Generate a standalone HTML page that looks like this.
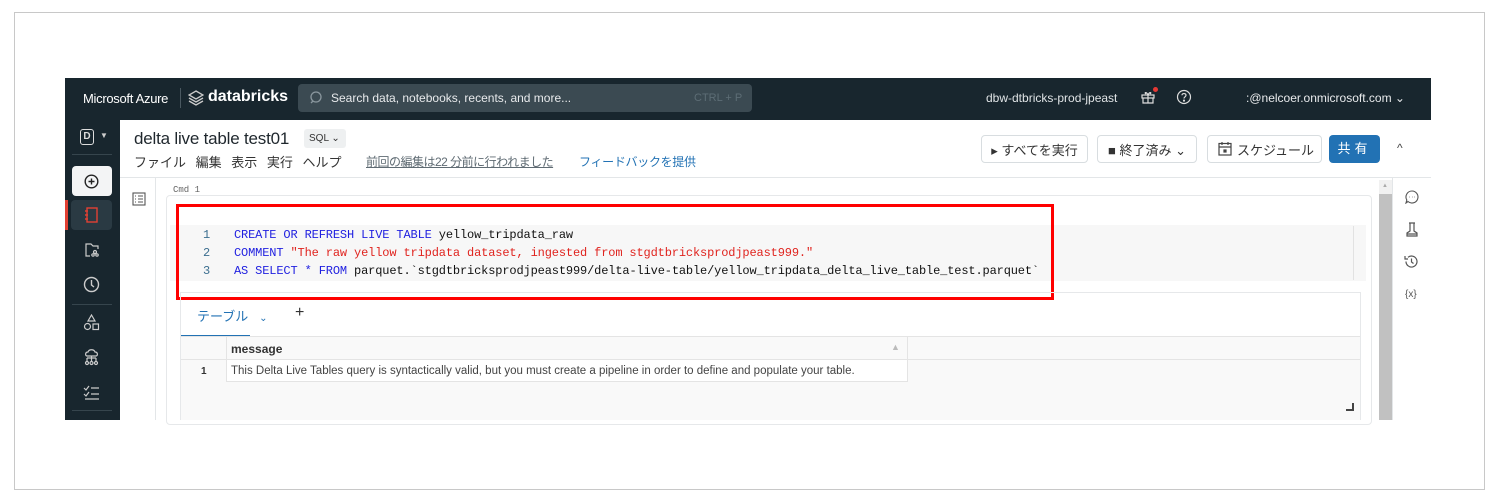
<!DOCTYPE html>
<html><head><meta charset="utf-8"><style>
*{box-sizing:border-box;margin:0;padding:0}
body{width:1495px;height:500px;background:#fff;font-family:"Liberation Sans","Noto Sans CJK JP",sans-serif;position:relative;overflow:hidden}
.a{position:absolute;white-space:nowrap}
.frame{left:14px;top:12px;width:1471px;height:478px;border:1px solid #c8c8c8}
.top{left:65px;top:78px;width:1366px;height:42px;background:#18262e}
.side{left:65px;top:120px;width:55px;height:300px;background:#18262e}
.mono{font-family:"Liberation Mono","DejaVu Sans Mono",monospace}
.btn{border:1px solid #d8dde0;border-radius:4px;background:#fff;height:28px;top:135px;font-size:13px;color:#333;display:flex;align-items:center;justify-content:center}
.kw{color:#1f1fe0}.st{color:#e0241f}
svg{position:absolute}
</style></head><body>
<div class="a frame"></div>
<div class="a top"></div>
<div class="a" style="left:83px;top:91px;color:#fff;font-size:13px;letter-spacing:-0.3px">Microsoft Azure</div>
<div class="a" style="left:180px;top:88px;width:1px;height:20px;background:#4a5860"></div>
<svg style="left:188px;top:90px" width="16" height="16" viewBox="0 0 16 16" fill="none" stroke="#ccc" stroke-width="1.3"><path d="M8 1L15 5L8 9L1 5Z M1 8L8 12L15 8 M1 11L8 15L15 11"/></svg>
<div class="a" style="left:208px;top:88px;color:#fff;font-size:16px;font-weight:bold">databricks</div>
<div class="a" style="left:298px;top:84px;width:454px;height:28px;background:#3b4a52;border-radius:4px"></div>
<svg style="left:309px;top:91px" width="14" height="14" viewBox="0 0 14 14" fill="none" stroke="#8a979e" stroke-width="1.3"><circle cx="7" cy="6" r="5"/><path d="M4 10L2 12"/></svg>
<div class="a" style="left:331px;top:91px;color:#e8eaec;font-size:12px">Search data, notebooks, recents, and more...</div>
<div class="a" style="left:694px;top:92px;color:#5d6d75;font-size:11px">CTRL + P</div>
<div class="a" style="left:986px;top:91px;color:#e0e4e6;font-size:12px">dbw-dtbricks-prod-jpeast</div>
<svg style="left:1140px;top:89px" width="16" height="16" viewBox="0 0 16 16" fill="none" stroke="#ddd" stroke-width="1.2"><rect x="2" y="6" width="12" height="3"/><path d="M3 9V14H13V9 M8 6V14 M8 6C6 2 4 4 6 5 M8 6C10 2 12 4 10 5"/></svg>
<div class="a" style="left:1153px;top:87px;width:5px;height:5px;border-radius:50%;background:#e53935"></div>
<svg style="left:1176px;top:89px" width="16" height="16" viewBox="0 0 16 16" fill="none" stroke="#ddd" stroke-width="1.2"><circle cx="8" cy="8" r="6.5"/><path d="M6 6.3C6 4 10 4 10 6.3C10 7.8 8 7.8 8 9.5"/><circle cx="8" cy="11.6" r=".5" fill="#ddd"/></svg>
<div class="a" style="left:1246px;top:91px;color:#e8eaec;font-size:12px">:@nelcoer.onmicrosoft.com ⌄</div>

<div class="a side"></div>
<div class="a" style="left:80px;top:129px;width:14px;height:16px;border:1.5px solid #ddd;border-radius:3px;color:#ddd;font-size:10px;text-align:center;line-height:13px;font-weight:bold">D</div>
<div class="a" style="left:100px;top:131px;color:#ccc;font-size:8px">▼</div>
<div class="a" style="left:72px;top:154px;width:40px;height:1px;background:#36454d"></div>
<div class="a" style="left:72px;top:166px;width:40px;height:30px;background:#f3f4f5;border-radius:4px"></div>
<svg style="left:84px;top:174px" width="15" height="15" viewBox="0 0 15 15" fill="none" stroke="#222" stroke-width="1.4"><circle cx="7.5" cy="7.5" r="6.3"/><path d="M7.5 4.5V10.5M4.5 7.5H10.5"/></svg>
<div class="a" style="left:65px;top:200px;width:3px;height:30px;background:#e24033"></div>
<div class="a" style="left:71px;top:200px;width:41px;height:30px;background:#2a3a43;border-radius:4px"></div>
<svg style="left:84px;top:207px" width="14" height="16" viewBox="0 0 14 16" fill="none" stroke="#e24033" stroke-width="1.4"><rect x="3" y="1" width="10" height="14"/><path d="M1 4H4M1 8H4M1 12H4"/></svg>
<svg style="left:84px;top:242px" width="16" height="16" viewBox="0 0 16 16" fill="none" stroke="#ccc" stroke-width="1.2"><path d="M6 14H2V2H7L9 4H14V7"/><circle cx="11" cy="10" r="1.5"/><circle cx="9" cy="13" r="1.2"/><circle cx="13" cy="13" r="1.2"/></svg>
<svg style="left:83px;top:276px" width="17" height="17" viewBox="0 0 17 17" fill="none" stroke="#ccc" stroke-width="1.4"><circle cx="8.5" cy="8.5" r="7"/><path d="M8.5 4V9L11 11"/></svg>
<div class="a" style="left:72px;top:304px;width:40px;height:1px;background:#36454d"></div>
<svg style="left:83px;top:314px" width="17" height="17" viewBox="0 0 17 17" fill="none" stroke="#ccc" stroke-width="1.2"><path d="M8.5 1L12 7H5Z"/><circle cx="4.5" cy="12.5" r="3"/><rect x="10" y="10" width="5.5" height="5.5"/></svg>
<svg style="left:83px;top:349px" width="17" height="17" viewBox="0 0 17 17" fill="none" stroke="#ccc" stroke-width="1.2"><path d="M4 7C2 7 2 3 5 3C6 0 11 0 12 3C15 3 15 7 13 7Z M8.5 7V12M4 9V12M13 9V12M4 9H13"/><circle cx="4" cy="14" r="1.5"/><circle cx="8.5" cy="14" r="1.5"/><circle cx="13" cy="14" r="1.5"/></svg>
<svg style="left:83px;top:384px" width="17" height="17" viewBox="0 0 17 17" fill="none" stroke="#ccc" stroke-width="1.2"><path d="M1 4L3 6L6 2M8 4H16M1 10L3 12L6 8M8 10H16M2 15H16"/></svg>
<div class="a" style="left:72px;top:410px;width:40px;height:1px;background:#36454d"></div>

<div class="a" style="left:134px;top:129px;font-size:17px;color:#1f272d;letter-spacing:-0.2px">delta live table test01</div>
<div class="a" style="left:304px;top:129px;width:42px;height:19px;background:#eef0f1;border-radius:3px;font-size:10px;color:#333;padding:4px 5px">SQL ⌄</div>
<div class="a" style="left:134px;top:152px;font-size:13px;color:#333;word-spacing:6px">ファイル 編集 表示 実行 ヘルプ</div>
<div class="a" style="left:366px;top:153px;font-size:12px;color:#5f6b73;text-decoration:underline;letter-spacing:-0.5px">前回の編集は22 分前に行われました</div>
<div class="a" style="left:579px;top:153px;font-size:12px;color:#2272b4;letter-spacing:-0.3px">フィードバックを提供</div>
<div class="a btn" style="left:981px;width:107px">▸ すべてを実行</div>
<div class="a btn" style="left:1097px;width:100px">■ 終了済み ⌄</div>
<div class="a btn" style="left:1207px;width:115px;padding-left:22px">スケジュール</div>
<svg style="left:1218px;top:141px" width="14" height="15" viewBox="0 0 14 15" fill="none" stroke="#444" stroke-width="1.2"><rect x="1" y="2.5" width="12" height="11.5"/><path d="M1 6H13M4 1V4M10 1V4"/><rect x="6" y="9" width="2" height="2" fill="#444"/></svg>
<div class="a" style="left:1329px;top:135px;width:51px;height:28px;background:#2272b4;border-radius:4px;color:#fff;font-size:13px;text-align:center;line-height:28px;letter-spacing:4px">共有</div>
<div class="a" style="left:1397px;top:141px;font-size:12px;color:#444">^</div>
<div class="a" style="left:120px;top:177px;width:1311px;height:1px;background:#e3e6e8"></div>

<div class="a" style="left:155px;top:178px;width:1px;height:242px;background:#e3e6e8"></div>
<svg style="left:132px;top:192px" width="14" height="14" viewBox="0 0 14 14" fill="none" stroke="#555" stroke-width="1.1"><rect x="1" y="1" width="12" height="12"/><path d="M3 4H4M6 4H11M3 7H4M6 7H11M3 10H4M6 10H11"/></svg>
<div class="a mono" style="left:173px;top:185px;font-size:9px;color:#666">Cmd 1</div>
<div class="a" style="left:166px;top:195px;width:1206px;height:230px;border:1px solid #e6e8ea;border-radius:4px"></div>
<div class="a" style="left:170px;top:225px;width:1196px;height:56px;background:#f7f7f7"></div>
<div class="a" style="left:1353px;top:226px;width:1px;height:54px;background:#e2e2e2"></div>
<div class="a mono" style="left:203px;top:226px;font-size:12px;line-height:18px;color:#3b6e8f">1<br>2<br>3</div>
<div class="a mono" style="left:234px;top:226px;font-size:12px;line-height:18px;color:#111;white-space:pre;letter-spacing:-0.14px"><span class="kw">CREATE OR REFRESH LIVE TABLE</span> yellow_tripdata_raw
<span class="kw">COMMENT</span> <span class="st">"The raw yellow tripdata dataset, ingested from stgdtbricksprodjpeast999."</span>
<span class="kw">AS SELECT</span> <span class="kw">*</span> <span class="kw">FROM</span> parquet.`stgdtbricksprodjpeast999/delta-live-table/yellow_tripdata_delta_live_table_test.parquet`</div>
<div class="a" style="left:176px;top:204px;width:878px;height:96px;border:3px solid #f00"></div>

<div class="a" style="left:180px;top:292px;width:1181px;height:128px;border:1px solid #e6e8ea;border-bottom:none"></div>
<div class="a" style="left:197px;top:306px;font-size:13px;color:#2272b4">テーブル &nbsp;&nbsp;<span style="font-size:10px">⌄</span></div>
<div class="a" style="left:295px;top:304px;font-size:16px;color:#333">+</div>
<div class="a" style="left:181px;top:335px;width:69px;height:2px;background:#2272b4"></div>
<div class="a" style="left:181px;top:336px;width:1179px;height:84px;background:#f9f9f9;border-top:1px solid #e4e4e4"></div>
<div class="a" style="left:181px;top:359px;width:1179px;height:1px;background:#e4e4e4"></div>
<div class="a" style="left:226px;top:337px;width:1px;height:45px;background:#e4e4e4"></div>
<div class="a" style="left:227px;top:360px;width:681px;height:22px;background:#fff;border-right:1px solid #e4e4e4;border-bottom:1px solid #e4e4e4"></div>
<div class="a" style="left:907px;top:337px;width:1px;height:23px;background:#e4e4e4"></div>
<div class="a" style="left:231px;top:342px;font-size:12px;font-weight:bold;color:#333">message</div>
<div class="a" style="left:891px;top:342px;font-size:9px;color:#bbb">▲</div>
<div class="a" style="left:201px;top:366px;font-size:10px;font-weight:bold;color:#333">1</div>
<div class="a" style="left:231px;top:365px;font-size:11.5px;color:#444">This Delta Live Tables query is syntactically valid, but you must create a pipeline in order to define and populate your table.</div>
<div class="a" style="left:1346px;top:403px;width:8px;height:8px;border-right:2px solid #444;border-bottom:2px solid #444"></div>

<div class="a" style="left:1379px;top:180px;width:13px;height:240px;background:#f1f1f1"></div>
<div class="a" style="left:1379px;top:194px;width:13px;height:226px;background:#c1c1c1"></div>
<div class="a" style="left:1382px;top:183px;font-size:6px;color:#aaa">▲</div>
<div class="a" style="left:1392px;top:178px;width:1px;height:242px;background:#e3e6e8"></div>
<svg style="left:1405px;top:190px" width="14" height="14" viewBox="0 0 14 14" fill="none" stroke="#555" stroke-width="1.1"><path d="M7 1A6 6 0 1 1 3 11.5L1 13L1.8 10A6 6 0 0 1 7 1Z"/><path d="M4.5 7H5M7 7H7.5M9.3 7H9.8"/></svg>
<svg style="left:1405px;top:222px" width="14" height="15" viewBox="0 0 14 15" fill="none" stroke="#555" stroke-width="1.2"><path d="M4 1H10M5 1V9L2 11V14H12V11L9 9V1M2 12H12"/></svg>
<svg style="left:1404px;top:254px" width="15" height="15" viewBox="0 0 15 15" fill="none" stroke="#555" stroke-width="1.2"><path d="M2 7.5A5.5 5.5 0 1 0 4 3.3M1 2V5H4M7.5 4.5V8L9.5 9.5"/></svg>
<div class="a" style="left:1405px;top:289px;font-size:10px;color:#555">{x}</div>
</body></html>
